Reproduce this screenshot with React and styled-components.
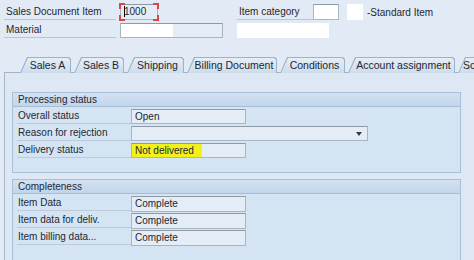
import React from 'react';
import styled, { createGlobalStyle } from 'styled-components';

const GlobalStyle = createGlobalStyle`
  html, body {
    margin: 0;
    padding: 0;
    background: #e2ebf5;
  }
  body {
    font-family: Tahoma, "Liberation Sans", Arial, sans-serif;
    font-size: 10px;
    color: #1c2733;
  }
`;

const Screen = styled.div`
  width: 474px;
  height: 260px;
  overflow: hidden;
  background: #e2ebf5;
`;

const Header = styled.div`
  display: flex;
  flex-direction: column;
  gap: 2px;
  padding: 4px 0 0 4px;
`;

const HeaderRow = styled.div`
  display: flex;
  align-items: center;
  height: 16px;
`;

const Label = styled.div`
  width: ${({ w }) => w}px;
  flex: none;
  height: 16px;
  line-height: 15px;
  padding-left: 2px;
  box-sizing: border-box;
  border-bottom: 1px solid #b8c6d4;
  margin-right: ${({ mr }) => mr || 0}px;
  margin-left: ${({ ml }) => ml || 0}px;
  white-space: nowrap;
`;

const Field = styled.div`
  flex: none;
  box-sizing: border-box;
  width: ${({ w }) => w}px;
  height: ${({ h }) => h || 16}px;
  line-height: 14px;
  padding-left: 3px;
  background: ${({ bg }) => bg || '#e4edf6'};
  border: 1px solid ${({ plain }) => (plain ? 'transparent' : '#a9b5c2')};
  border-top-color: ${({ plain }) => (plain ? 'transparent' : '#8e9aa6')};
  margin-left: ${({ ml }) => ml || 0}px;
  position: relative;
  white-space: nowrap;
  overflow: hidden;
`;

const FocusField = styled(Field)`
  overflow: visible;
`;

const Corner = styled.span`
  position: absolute;
  width: 4px;
  height: 4px;
  border: 0 solid #d9464a;
  ${({ pos }) => pos.includes('t') ? 'top: -2px; border-top-width: 2px;' : 'bottom: -2px; border-bottom-width: 2px;'}
  ${({ pos }) => pos.includes('l') ? 'left: -2px; border-left-width: 2px;' : 'right: -2px; border-right-width: 2px;'}
`;

const WhitePart = styled.div`
  position: absolute;
  left: 0;
  top: 0;
  bottom: 0;
  width: ${({ w }) => w}px;
  background: #ffffff;
`;

const Caret = styled.span`
  border-left: 1px solid #000;
  margin-right: -1px;
`;

const PlainText = styled.span`
  margin-left: 4px;
  white-space: nowrap;
`;

const TabStrip = styled.div`
  display: flex;
  gap: 3px;
  margin-top: 19px;
  padding-left: 20px;
  height: 15px;
  position: relative;
  z-index: 1;
`;

const Tab = styled.div`
  flex: none;
  width: ${({ w }) => w}px;
  height: 16px;
  background: #9eb2c7;
  clip-path: polygon(7px 0, calc(100% - 2px) 0, 100% 2px, 100% 100%, 0 100%);
  padding: 1px 1px 0 1px;
  box-sizing: border-box;
`;

const TabFace = styled.div`
  height: 100%;
  background: linear-gradient(#e6eef7, #cddceb);
  clip-path: polygon(7px 0, calc(100% - 2px) 0, 100% 2px, 100% 100%, 0 100%);
  text-align: ${({ left }) => (left ? 'left' : 'center')};
  line-height: 14px;
  padding-left: 4px;
  white-space: nowrap;
  overflow: hidden;
  color: #1c2733;
  font-size: 10.5px;
`;

const Panel = styled.div`
  margin-left: 4px;
  border-top: 1px solid #a3b5c8;
  border-left: 1px solid #a3b5c8;
  background: #dde8f4;
  padding: 19px 12px 0 7px;
  display: flex;
  flex-direction: column;
  gap: 6px;
  height: 200px;
`;

const Group = styled.div`
  width: 449px;
  box-sizing: border-box;
  border: 1px solid #aac0d8;
  background: #d5e4f3;
  height: ${({ h }) => h}px;
  flex: none;
`;

const GroupTitle = styled.div`
  height: 14px;
  line-height: 13px;
  padding-left: 5px;
  background: linear-gradient(#d3e2f2, #c1d5eb);
  border-bottom: 1px solid #a7bdd6;
  box-sizing: border-box;
`;

const GroupBody = styled.div`
  display: flex;
  flex-direction: column;
  gap: 2px;
  padding: 2px 0 0 4px;
`;

const Row = styled.div`
  display: flex;
  align-items: center;
  height: 15px;
`;

const RowLabel = styled.div`
  width: 114px;
  height: 15px;
  line-height: 14px;
  padding-left: 1px;
  border-bottom: 1px solid #bccbdb;
  box-sizing: border-box;
  white-space: nowrap;
`;

const Highlight = styled.span`
  background: #f2f21a;
  padding: 0 8px 0 3px;
  margin-left: -3px;
  display: inline-block;
  height: 13px;
`;

const Arrow = styled.span`
  position: absolute;
  right: 5px;
  top: 5px;
  width: 0;
  height: 0;
  border-left: 3px solid transparent;
  border-right: 3px solid transparent;
  border-top: 4px solid #2a3a4e;
`;

const tabs = [
  ['Sales A', 51],
  ['Sales B', 50],
  ['Shipping', 57],
  ['Billing Document', 90],
  ['Conditions', 65],
  ['Account assignment', 107],
  ['Sc', 40],
];

const App = () => (
  <Screen>
    <GlobalStyle />
    <Header>
      <HeaderRow>
        <Label w={112} mr={4}>Sales Document Item</Label>
        <FocusField w={38}>
          <Corner pos="tl" />
          <Corner pos="tr" />
          <Corner pos="bl" />
          <Corner pos="br" />
          <Caret />1000
        </FocusField>
        <Label w={76} ml={79}>Item category</Label>
        <Field w={26} bg="#ffffff" />
        <Field w={16} ml={8} bg="#ffffff" plain />
        <PlainText>-Standard Item</PlainText>
      </HeaderRow>
      <HeaderRow>
        <Label w={112} mr={4}>Material</Label>
        <Field w={103} h={15}>
          <WhitePart w={52} />
        </Field>
        <Field w={92} h={15} ml={14} bg="#ffffff" plain />
      </HeaderRow>
    </Header>

    <TabStrip>
      {tabs.map(([name, w], i) => (
        <Tab key={name} w={w}>
          <TabFace left={i === tabs.length - 1}>{name}</TabFace>
        </Tab>
      ))}
    </TabStrip>

    <Panel>
      <Group h={81}>
        <GroupTitle>Processing status</GroupTitle>
        <GroupBody>
          <Row>
            <RowLabel>Overall status</RowLabel>
            <Field w={115} h={15}>Open</Field>
          </Row>
          <Row>
            <RowLabel>Reason for rejection</RowLabel>
            <Field w={237} h={15}>
              <Arrow />
            </Field>
          </Row>
          <Row>
            <RowLabel>Delivery status</RowLabel>
            <Field w={115} h={15}>
              <Highlight>Not delivered</Highlight>
            </Field>
          </Row>
        </GroupBody>
      </Group>
      <Group h={82}>
        <GroupTitle>Completeness</GroupTitle>
        <GroupBody>
          <Row>
            <RowLabel>Item Data</RowLabel>
            <Field w={115} h={16}>Complete</Field>
          </Row>
          <Row>
            <RowLabel>Item data for deliv.</RowLabel>
            <Field w={115} h={16}>Complete</Field>
          </Row>
          <Row>
            <RowLabel>Item billing data...</RowLabel>
            <Field w={115} h={16}>Complete</Field>
          </Row>
        </GroupBody>
      </Group>
    </Panel>
  </Screen>
);

export default App;
